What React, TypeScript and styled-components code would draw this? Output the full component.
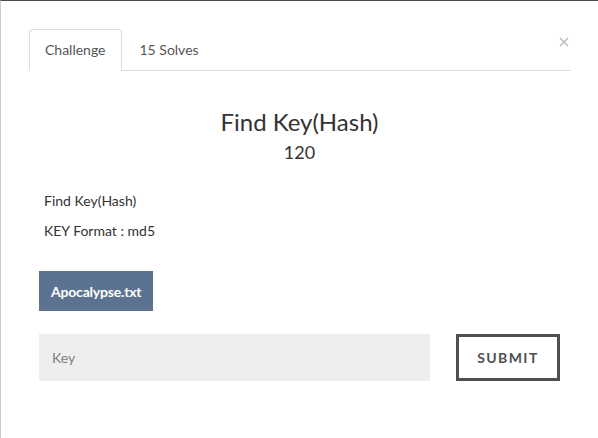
import React from "react";
import styled, { createGlobalStyle } from "styled-components";

const Global = createGlobalStyle`
  html, body { margin: 0; padding: 0; background: #fff; }
  body { font-family: Lato, "Open Sans", sans-serif; }
  * { box-sizing: border-box; }
`;

const Modal = styled.div`
  width: 598px;
  height: 438px;
  border-top: 1px solid #4a4a4a;
  border-left: 1px solid #cdcdcd;
  padding: 28px 27px 0 28px;
  background: #fff;
  color: #333;
  font-family: Lato, sans-serif;
`;

const Header = styled.div`
  display: flex;
  align-items: flex-start;
  border-bottom: 1px solid #ddd;
`;

const Tab = styled.div<{ $active?: boolean }>`
  padding: 10px 15px;
  margin-right: 2px;
  margin-bottom: -1px;
  line-height: 20px;
  font-size: 14px;
  color: #555;
  border: 1px solid transparent;
  border-radius: 4px 4px 0 0;
  background: transparent;
  cursor: pointer;
  ${(p) =>
    p.$active &&
    `border-color: #ddd #ddd #fff; background: #fff;`}
`;

const Close = styled.button`
  margin-left: auto;
  margin-top: 8px;
  margin-right: 2px;
  padding: 0;
  border: 0;
  background: transparent;
  width: 10px;
  height: 10px;
  display: flex;
  cursor: pointer;
`;

const Pane = styled.div`
  padding: 0 11px 0 10px;
`;

const Title = styled.h3`
  margin: 38px 0 0;
  font-size: 24px;
  line-height: 1.1;
  font-weight: 400;
  text-align: center;
  color: #333;
`;

const Points = styled.h4`
  margin: 8px 0 0;
  font-size: 18px;
  line-height: 1.1;
  font-weight: 400;
  text-align: center;
  color: #333;
`;

const Description = styled.div`
  margin-top: 28px;
  padding-left: 5px;
  font-size: 14px;
  line-height: 20px;
  color: #333;
  & p { margin: 0 0 10px; }
  & p:last-child { margin-bottom: 0; }
`;

const Files = styled.div`
  margin-top: 30px;
  display: flex;
`;

const FileButton = styled.a`
  display: inline-flex;
  align-items: center;
  height: 40px;
  padding: 0 12px;
  background: #5b7290;
  color: #fff;
  font-weight: 700;
  font-size: 14px;
  letter-spacing: -0.2px;
  text-decoration: none;
`;

const SubmitRow = styled.form`
  margin-top: 23px;
  display: grid;
  grid-template-columns: 1fr 104px;
  column-gap: 26px;
`;

const KeyInput = styled.input`
  height: 47px;
  border: 0;
  background: #eee;
  padding: 0 13px;
  font-family: Lato, sans-serif;
  font-size: 14px;
  color: #555;
  outline: none;
  &::placeholder { color: #7a7f88; }
`;

const SubmitButton = styled.button`
  height: 47px;
  border: 3px solid #4f4f4f;
  background: #fff;
  color: #4f4f55;
  font-family: Lato, sans-serif;
  font-weight: 700;
  font-size: 14px;
  letter-spacing: 1.4px;
  padding: 0;
  cursor: pointer;
`;

export default function App() {
  return (
    <>
      <Global />
      <Modal>
        <Header>
          <Tab $active>Challenge</Tab>
          <Tab>15 Solves</Tab>
          <Close aria-label="Close">
            <svg width="10" height="10" viewBox="0 0 10 10">
              <path d="M1 1 L9 9 M9 1 L1 9" stroke="#bdbdbd" strokeWidth="1.6" />
            </svg>
          </Close>
        </Header>
        <Pane>
          <Title>Find Key(Hash)</Title>
          <Points>120</Points>
          <Description>
            <p>Find Key(Hash)</p>
            <p>KEY Format : md5</p>
          </Description>
          <Files>
            <FileButton href="#">Apocalypse.txt</FileButton>
          </Files>
          <SubmitRow onSubmit={(e) => e.preventDefault()}>
            <KeyInput placeholder="Key" />
            <SubmitButton type="submit">SUBMIT</SubmitButton>
          </SubmitRow>
        </Pane>
      </Modal>
    </>
  );
}
